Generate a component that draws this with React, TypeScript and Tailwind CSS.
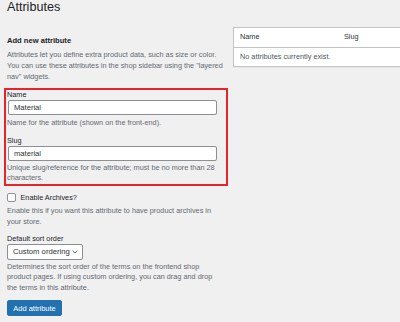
import React from "react";

export default function App() {
  return (
    <div className="w-[400px] h-[322px] overflow-hidden bg-[#f0f0f1] text-[#1d2327] font-['Liberation_Sans',Arial,sans-serif]">
      <div className="pl-[7px]">
        <h1 className="text-[12.6px] leading-[15px] font-normal text-[#1d2327]">Attributes</h1>
        <div className="flex mt-[12px]">
          {/* Left column */}
          <div className="w-[216px] shrink-0 pt-[7.5px]">
            <h2 className="text-[7.6px] leading-[11px] font-bold text-[#1d2327]">Add new attribute</h2>
            <p className="mt-[3.2px] text-[7.3px] leading-[11.2px] text-[#646970]">
              Attributes let you define extra product data, such as size or color. You can use these attributes in the shop sidebar using the "layered nav" widgets.
            </p>
            <div className="mt-[5.7px] ml-[-3px] w-[224px] border-2 border-[#e5242b] pl-[1px] pr-[9px] pb-[0px]">
              <label className="block text-[7.3px] leading-[10px] text-[#1d2327]">Name</label>
              <div className="ml-[1px] h-[15px] border border-[#8c8f94] bg-white rounded-[2px] flex items-center pl-[5px] text-[7.6px] text-[#2c3338]">
                Material
              </div>
              <p className="mt-[2px] text-[7.3px] leading-[11px] text-[#646970]">Name for the attribute (shown on the front-end).</p>
              <label className="mt-[8px] block text-[7.3px] leading-[10px] text-[#1d2327]">Slug</label>
              <div className="ml-[1px] h-[15px] border border-[#8c8f94] bg-white rounded-[2px] flex items-center pl-[5px] text-[7.6px] text-[#2c3338]">
                material
              </div>
              <p className="mt-[2px] text-[7.3px] leading-[10.5px] text-[#646970]">
                Unique slug/reference for the attribute; must be no more than 28 characters.
              </p>
            </div>
            <div className="mt-[6px] flex items-center gap-[4.5px]">
              <span className="w-[9px] h-[9px] border border-[#8c8f94] bg-white rounded-[2px] shrink-0" />
              <span className="text-[7.3px] leading-[11px] text-[#1d2327]">Enable Archives?</span>
            </div>
            <p className="mt-[2px] text-[7.3px] leading-[11px] text-[#646970]">
              Enable this if you want this attribute to have product archives in your store.
            </p>
            <label className="mt-[6.3px] block text-[7.3px] leading-[11px] text-[#1d2327]">Default sort order</label>
            <div className="mt-[0px] w-[76px] h-[15.5px] border border-[#8c8f94] bg-white rounded-[2px] flex items-center justify-between pl-[5px] pr-[4px] text-[7.7px] text-[#2c3338]">
              <span>Custom ordering</span>
              <svg width="6" height="4" viewBox="0 0 6 4" fill="none">
                <path d="M0.6 0.7 L3 3 L5.4 0.7" stroke="#50575e" strokeWidth="0.9" />
              </svg>
            </div>
            <p className="mt-[2px] text-[7.3px] leading-[10.65px] text-[#646970]">
              Determines the sort order of the terms on the frontend shop product pages. If using custom ordering, you can drag and drop the terms in this attribute.
            </p>
            <button className="mt-[6px] h-[16px] w-[55px] bg-[#2271b1] rounded-[2px] text-white text-[7.5px] leading-[16px] border border-[#2271b1]">
              Add attribute
            </button>
          </div>
          {/* Right column */}
          <div className="ml-[10px] shrink-0">
            <div className="w-[260px] bg-white border border-[#c3c4c7] shadow-[0_1px_1px_rgba(0,0,0,0.04)]">
              <div className="flex h-[20px] items-center border-b border-[#c3c4c7] text-[7.3px] text-[#2c3338]">
                <span className="w-[110px] pl-[6px]">Name</span>
                <span>Slug</span>
              </div>
              <div className="flex h-[18px] items-center pl-[6px] text-[7.3px] text-[#50575e]">
                No attributes currently exist.
              </div>
            </div>
          </div>
        </div>
      </div>
    </div>
  );
}
